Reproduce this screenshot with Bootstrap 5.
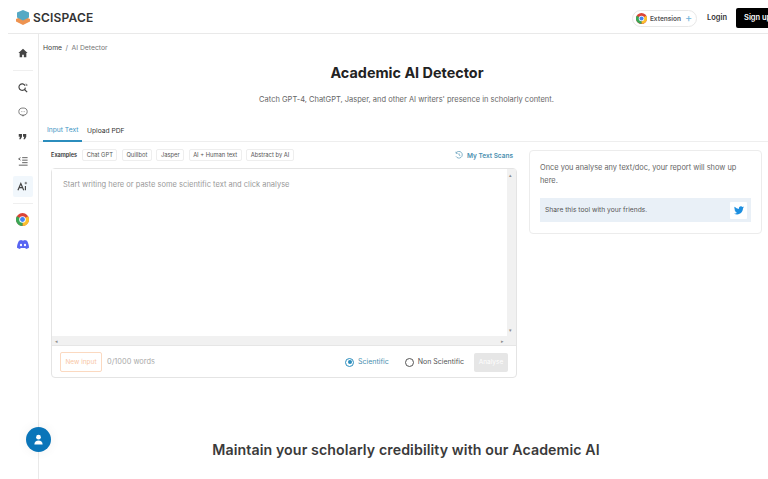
<!DOCTYPE html>
<html lang="en"><head><meta charset="utf-8"><title>AI Detector</title>
<link href="https://cdn.jsdelivr.net/npm/bootstrap@5.3.0/dist/css/bootstrap.min.css" rel="stylesheet">
<style>
html,body{height:479px;overflow:hidden;background:#fff}
body{font-family:Inter,"Liberation Sans",sans-serif;color:#333}
.topbar{height:34px;margin-left:8px;border-bottom:1px solid #e9e9e9;padding:2px 0 0 8px}
.brand{font-size:12px;font-weight:600;color:#333;letter-spacing:.2px;margin-left:3px}
.top-actions{margin-top:1px}
.ext-pill{height:17px;width:65px;margin-right:10px;border:1px solid #e8e8e8;border-radius:9px;font-size:6.5px;font-weight:600;color:#555;padding-left:3px;gap:3px}
.ext-label{margin-top:3px}
.ext-plus{color:#6fb4dc;font-size:11px;font-weight:400;line-height:1;margin-left:1px}
.login-link{font-size:7.5px;font-weight:600;color:#333;margin-right:9px}
.signup{background:#000;color:#fff;font-size:7.5px;font-weight:600;height:20px;width:32px;border-radius:2px 0 0 2px;padding-left:8px;line-height:20px;overflow:hidden;white-space:nowrap}
.shell{height:445px}
.siderail{margin-left:7px;border-right:1px solid #e9e9e9;padding-top:7px;flex:none;box-sizing:content-box;width:31px}
.rail-ico{height:24.5px;width:22px}
.rail-sep{width:20px;height:1px;background:#efefef;margin:4px 0 5px}
.rail-on{background:#f1f7fc;border-radius:2px;height:21px;width:20px;margin:2px 0 1px}
.rail-sep.after-on{margin:5px 0 4px}
.mainpane{min-width:0}
.crumb{font-size:6.8px;color:#777;padding:10px 0 0 4px;line-height:8px}
.crumb b{font-weight:400;color:#444}
.crumb i{font-style:normal;margin:0 3.5px}
.headline{font-size:14.4px;font-weight:700;color:#222;text-align:center;margin:11.500px 0 0;line-height:17px;padding-left:7px}
.subline{font-size:7.5px;color:#666;text-align:center;margin:14.500px 0 0;line-height:10px;padding-left:6px}
.tabbar{margin:17px 0 0;border-bottom:1px solid #eee;height:20px;font-size:6.7px;padding-left:4px}
.tab-on{color:#3d94c4;width:39px;padding:3px 0 0 4px;border-bottom:2px solid #2b8dbd;height:20px}
.tab-off{color:#333;padding:4px 0 0 5px}
.workrow{padding:0 6px 0 12px;gap:12px;align-items:flex-start}
.leftcol{width:466px;flex:none}
.sample-row{height:26px;font-size:5.8px;color:#555;gap:4.500px}
.sample-label{font-weight:600;color:#333;font-size:5.6px;margin-right:.5px}
.chip{border:1px solid #eee;border-radius:2px;height:12px;line-height:10px;padding:0 3.500px;font-size:5.8px;color:#555}
.scans{font-size:6.5px;font-weight:600;color:#4a8fb0;gap:4px;margin-right:4px}
.scans-label{margin-top:3px}
.editor{border:1px solid #e4e4e4;border-radius:4px;height:210px}
.edit-area{height:177px;position:relative;border-bottom:1px solid #e6e6e6;padding:10px 11px;font-size:7.5px;color:#999;background:#fff}
.sb-v{position:absolute;top:0;right:0;bottom:0;width:9px;background:#f1f1f1}
.sb-h{position:absolute;left:0;right:0;bottom:0;height:9px;background:#f1f1f1}
.sb-arrow{position:absolute;font-size:5px;line-height:6px;color:#8d8d8d}
.arr-l{left:3px;top:2px}.arr-r{right:12px;top:2px}.arr-u{left:2px;top:3px}.arr-d{left:2px;bottom:12px}
.edit-foot{height:31px;padding:1px 8px 0 8px;font-size:7px}
.new-btn{border:1px solid #fbd9c0;border-radius:2px;color:#f8c6a4;height:20px;width:42px;text-align:center;line-height:18px;font-size:6.5px;margin-right:5px}
.wordcount{color:#aaa;font-size:7.4px}
.radio-dot{width:9px;height:9px;border-radius:50%;border:1px solid #555;margin-right:4px;flex:none;display:inline-block}
.radio-dot.picked{border-color:#2b8dbd;position:relative}
.radio-dot.picked::after{content:"";position:absolute;inset:1.5px;border-radius:50%;background:#2b8dbd}
.opt-sci{color:#4a8fb0;margin-right:16px}
.opt-non{color:#555}
.analyse-btn{background:#e6e6e6;color:#fff;height:19px;width:34px;border-radius:2px;text-align:center;line-height:19px;font-size:6.5px;margin-left:10px}
.resultcard{width:233px;margin-top:8px;height:84px;border:1px solid #ececec;border-radius:4px;padding:10px;font-size:7.4px;line-height:13px;color:#666}
.sharebar{background:#e9f0f7;height:24px;margin:11px 0 0;padding:0 4px 0 5px;font-size:6.7px;color:#555}
.tw-box{width:17px;height:17px;background:#fff;border-radius:1px}
.promo{margin-top:63px;text-align:center;font-size:14.2px;font-weight:600;color:#3a3a3a;line-height:18px;padding-left:5px;letter-spacing:.1px}
.helper{position:absolute;left:26px;top:427px;width:25px;height:25px;border-radius:50%;background:#0a75b9;box-shadow:0 0 12px rgba(0,0,0,.06)}
</style></head>
<body>
<header class="topbar d-flex align-items-center">
  <svg width="14" height="15" viewBox="0 0 14 15"><path d="M7 6 14 9v2.500L7 15 0 11.500V9z" fill="#ee9350"/><path d="M7 0 13 2.500v5L7 10.500 1 7.500v-5z" fill="#56a9c4"/></svg>
  <span class="brand">SCISPACE</span>
  <div class="top-actions ms-auto d-flex align-items-center">
    <div class="ext-pill d-flex align-items-center">
      <svg width="11" height="11" viewBox="0 0 24 24"><circle cx="12" cy="12" r="12" fill="#db4437"/><path d="M12 12 22.400 6A12 12 0 0 1 12 24z" fill="#fbc02d"/><path d="M12 12 12 24A12 12 0 0 1 1.600 6z" fill="#3aa757"/><circle cx="12" cy="12" r="6" fill="#fff"/><circle cx="12" cy="12" r="4.500" fill="#4285f4"/></svg>
      <span class="ext-label">Extension</span><span class="ext-plus">+</span>
    </div>
    <span class="login-link">Login</span>
    <div class="signup">Sign up</div>
  </div>
</header>
<div class="shell d-flex">
  <nav class="siderail d-flex flex-column align-items-center">
    <div class="rail-ico d-flex align-items-center justify-content-center"><svg width="10" height="10" viewBox="0 0 12 12"><path d="M6 1 0.500 6H2v5h3V8h2v3h3V6h1.500z" fill="#444"/></svg></div>
    <div class="rail-sep"></div>
    <div class="rail-ico d-flex align-items-center justify-content-center"><svg width="10" height="10" viewBox="0 0 12 12" fill="none" stroke="#444" stroke-width="1.400"><path d="M8.500 3.200A3.900 3.900 0 1 0 8.900 5.500"/><path d="M7.800 7.800 11 11"/><path d="M9.500 .8 9.800 2.200 11.200 2.500 9.800 2.800" stroke-width=".8"/></svg></div>
    <div class="rail-ico d-flex align-items-center justify-content-center"><svg width="10" height="10" viewBox="0 0 12 12" fill="none" stroke="#555" stroke-width=".9"><ellipse cx="6" cy="5.500" rx="5" ry="4.300"/><path d="M3.800 5.500h.6M5.700 5.500h.6M7.600 5.500h.6M4.500 9.600 6 11l1.500-1.400"/></svg></div>
    <div class="rail-ico d-flex align-items-center justify-content-center"><svg width="9" height="9" viewBox="0 0 12 12" fill="#444"><path d="M1 2.500h4.300v3.700L3.500 9.500H1.600l1.100-3.200H1zM6.700 2.500H11v3.700L9.200 9.500H7.300l1.100-3.200H6.700z"/></svg></div>
    <div class="rail-ico d-flex align-items-center justify-content-center"><svg width="10" height="10" viewBox="0 0 12 12" fill="none" stroke="#444" stroke-width="1"><path d="M5 2h6.500M5 5h6.500M5 8h6.500M1 11h10.500M3 2 .7 3.500 3 5"/></svg></div>
    <div class="rail-on rail-ico d-flex align-items-center justify-content-center"><svg width="11" height="10" viewBox="0 0 13 12" fill="none" stroke="#444" stroke-width="1.400"><path d="M1 11 4.500 3 8 11M2.400 8h4.200M10 6v5"/><path d="M10.500 1v3M9 2.500h3" stroke-width=".8"/></svg></div>
    <div class="rail-sep after-on"></div>
    <div class="rail-ico d-flex align-items-center justify-content-center"><svg width="13" height="13" viewBox="0 0 24 24"><circle cx="12" cy="12" r="12" fill="#db4437"/><path d="M12 12 22.400 6A12 12 0 0 1 12 24z" fill="#fbc02d"/><path d="M12 12 12 24A12 12 0 0 1 1.600 6z" fill="#3aa757"/><circle cx="12" cy="12" r="6" fill="#fff"/><circle cx="12" cy="12" r="4.500" fill="#4285f4"/></svg></div>
    <div class="rail-ico d-flex align-items-center justify-content-center"><svg width="12" height="9" viewBox="0 0 12 9"><path d="M2 .8C3 .3 4 .1 4.500 0l.3.6h2.400l.3-.6c.5.100 1.500.3 2.500.8C11.300 3 12 5.500 12 7.800 11 8.500 10 8.900 9 9l-.7-1.100H3.700L3 9C2 8.900 1 8.500 0 7.800 0 5.500.7 3 2 .8z" fill="#5865f2"/><ellipse cx="4" cy="5" rx="1.100" ry="1.300" fill="#fff"/><ellipse cx="8" cy="5" rx="1.100" ry="1.300" fill="#fff"/></svg></div>
  </nav>
  <main class="mainpane flex-grow-1">
    <div class="crumb"><b>Home</b><i>/</i>AI Detector</div>
    <h1 class="headline">Academic AI Detector</h1>
    <p class="subline">Catch GPT-4, ChatGPT, Jasper, and other AI writers' presence in scholarly content.</p>
    <div class="tabbar d-flex">
      <div class="tab-on">Input Text</div>
      <div class="tab-off">Upload PDF</div>
    </div>
    <div class="workrow d-flex">
      <div class="leftcol">
        <div class="sample-row d-flex align-items-center">
          <span class="sample-label">Examples</span>
          <span class="chip">Chat GPT</span><span class="chip">Quillbot</span><span class="chip">Jasper</span><span class="chip">AI + Human text</span><span class="chip">Abstract by AI</span>
          <span class="scans ms-auto d-flex align-items-center"><svg width="8" height="8" viewBox="0 0 12 12" fill="none" stroke="#4a8fb0" stroke-width="1"><path d="M2 2.500A5 5 0 1 1 1.500 8M1.500 1v2.500H4M6 3.500V6l2 1"/></svg><span class="scans-label">My Text Scans</span></span>
        </div>
        <div class="editor">
          <div class="edit-area">Start writing here or paste some scientific text and click analyse
            <div class="sb-h"><span class="sb-arrow arr-l">◂</span><span class="sb-arrow arr-r">▸</span></div>
            <div class="sb-v"><span class="sb-arrow arr-u">▴</span><span class="sb-arrow arr-d">▾</span></div>
          </div>
          <div class="edit-foot d-flex align-items-center">
            <span class="new-btn">New input</span>
            <span class="wordcount">0/1000 words</span>
            <span class="opt-sci ms-auto d-flex align-items-center"><span class="radio-dot picked"></span>Scientific</span>
            <span class="opt-non d-flex align-items-center"><span class="radio-dot"></span>Non Scientific</span>
            <span class="analyse-btn">Analyse</span>
          </div>
        </div>
      </div>
      <aside class="resultcard">
        Once you analyse any text/doc, your report will show up<br>here.
        <div class="sharebar d-flex align-items-center justify-content-between">
          <span>Share this tool with your friends.</span>
          <span class="tw-box d-flex align-items-center justify-content-center"><svg width="10" height="9" viewBox="0 0 24 20"><path d="M24 2.400c-.9.400-1.800.7-2.800.8 1-.6 1.800-1.500 2.200-2.700-.9.600-2 1-3.100 1.200A4.900 4.900 0 0 0 11.900 6.200 14 14 0 0 1 1.700.9a4.900 4.900 0 0 0 1.500 6.600c-.8 0-1.600-.2-2.200-.6 0 2.400 1.700 4.400 3.900 4.900-.7.200-1.500.2-2.200.1.600 2 2.400 3.400 4.600 3.400A9.900 9.900 0 0 1 0 17.300 14 14 0 0 0 7.500 19.500c9.100 0 14.300-7.700 14-14.600 1-.7 1.800-1.500 2.500-2.500z" fill="#1d8fe0"/></svg></span>
        </div>
      </aside>
    </div>
    <div class="promo">Maintain your scholarly credibility with our Academic AI</div>
  </main>
</div>
<div class="helper d-flex align-items-center justify-content-center"><svg width="11" height="11" viewBox="0 0 12 12" fill="#fff"><circle cx="6" cy="3.500" r="2.600"/><path d="M1.500 11.500c0-3 2-4.500 4.500-4.500s4.500 1.500 4.500 4.500z"/></svg></div>
</body></html>
